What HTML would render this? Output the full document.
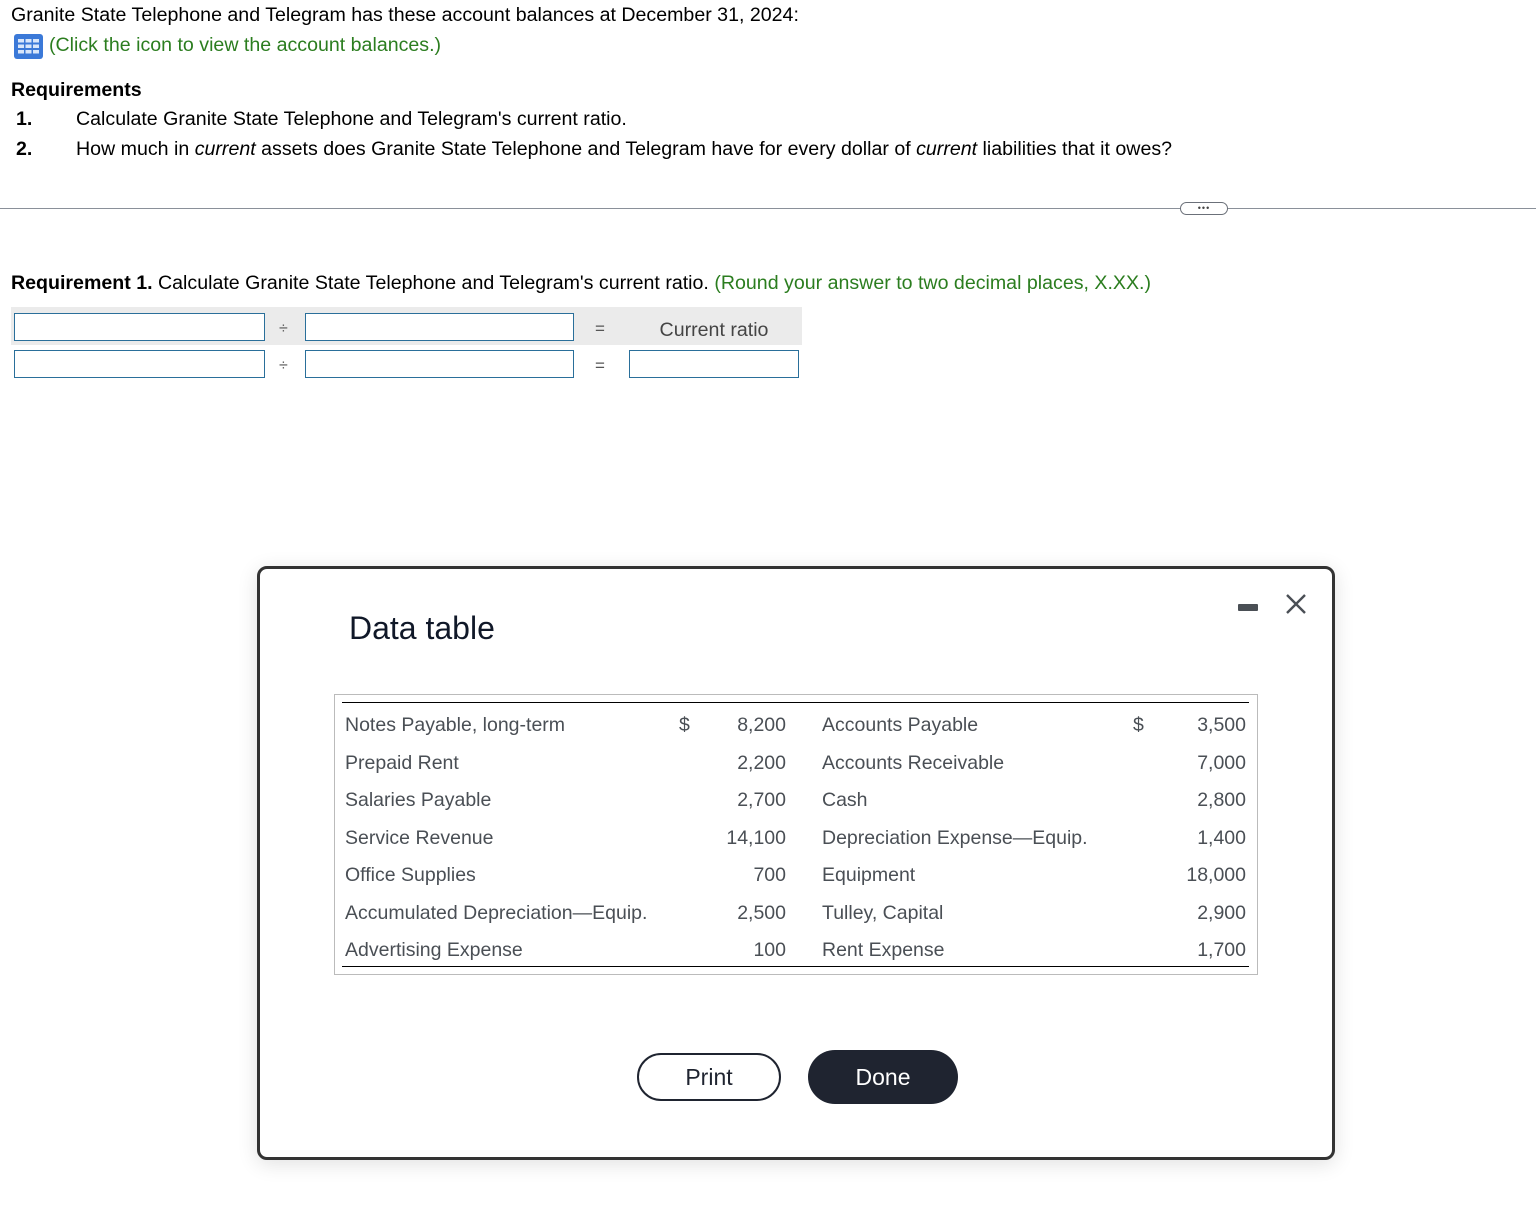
<!DOCTYPE html>
<html><head><meta charset="utf-8"><style>
*{margin:0;padding:0;box-sizing:border-box}
body{width:1536px;height:1206px;background:#fff;font-family:"Liberation Sans",Arial,sans-serif;color:#000;position:relative;overflow:hidden}
.a{position:absolute;white-space:nowrap}
.t18{font-size:19.6px;line-height:20px}
.g{color:#2b7d1f}
.inp{position:absolute;border:1px solid #2a6f9a;background:#fff;height:28px}
.dt{font-size:19.5px;line-height:22px;color:#4a4f55}
.r{text-align:right}
</style></head><body>
<div class="a t18" style="left:11px;top:5px">Granite State Telephone and Telegram has these account balances at December 31, 2024:</div>
<svg class="a" style="left:14px;top:34px" width="29" height="25" viewBox="0 0 29 25"><rect x="0" y="0" width="29" height="25" rx="3" fill="#3b79d8"/><g fill="#d8e6fa"><rect x="4" y="5" width="6" height="3.5"/><rect x="11.5" y="5" width="6" height="3.5"/><rect x="19" y="5" width="6" height="3.5"/><rect x="4" y="10.5" width="6" height="3.5"/><rect x="11.5" y="10.5" width="6" height="3.5"/><rect x="19" y="10.5" width="6" height="3.5"/><rect x="4" y="16" width="6" height="3.5"/><rect x="11.5" y="16" width="6" height="3.5"/><rect x="19" y="16" width="6" height="3.5"/></g></svg>
<div class="a t18 g" style="left:49px;top:35px">(Click the icon to view the account balances.)</div>
<div class="a t18" style="left:11px;top:80px;font-weight:bold">Requirements</div>
<div class="a t18" style="left:16px;top:109px;font-weight:bold">1.</div>
<div class="a t18" style="left:76px;top:109px">Calculate Granite State Telephone and Telegram's current ratio.</div>
<div class="a t18" style="left:16px;top:139px;font-weight:bold">2.</div>
<div class="a t18" style="left:76px;top:139px">How much in <i>current</i> assets does Granite State Telephone and Telegram have for every dollar of <i>current</i> liabilities that it owes?</div>
<div class="a" style="left:0;top:208px;width:1536px;height:1px;background:#8a9099"></div>
<div class="a" style="left:1180px;top:202px;width:48px;height:13px;border:1px solid #6b7079;border-radius:7px;background:#fff;font-size:9px;line-height:10px;text-align:center;color:#444;letter-spacing:1px">&bull;&bull;&bull;</div>
<div class="a t18" style="left:11px;top:273px"><b>Requirement 1.</b> Calculate Granite State Telephone and Telegram's current ratio. <span class="g">(Round your answer to two decimal places, X.XX.)</span></div>
<div class="a" style="left:11px;top:307px;width:791px;height:38px;background:#ebebeb"></div>
<div class="inp" style="left:14px;top:313px;width:251px"></div>
<div class="inp" style="left:305px;top:313px;width:269px"></div>
<div class="inp" style="left:14px;top:350px;width:251px"></div>
<div class="inp" style="left:305px;top:350px;width:269px"></div>
<div class="inp" style="left:629px;top:350px;width:170px"></div>
<div class="a" style="left:279px;top:320px;font-size:16px;color:#555">÷</div>
<div class="a" style="left:279px;top:357px;font-size:16px;color:#555">÷</div>
<div class="a" style="left:595px;top:319px;font-size:17px;color:#555">=</div>
<div class="a" style="left:595px;top:356px;font-size:17px;color:#555">=</div>
<div class="a" style="left:629px;top:320px;width:170px;text-align:center;color:#444;font-size:19.6px;line-height:20px">Current ratio</div>

<div class="a" style="left:257px;top:566px;width:1078px;height:594px;border:3px solid #333;border-radius:10px;background:#fff;box-shadow:0 4px 20px rgba(0,0,0,0.12)"></div>
<div class="a" style="left:349px;top:611px;font-size:32px;line-height:34px;color:#101828">Data table</div>
<div class="a" style="left:1238px;top:604px;width:20px;height:7px;background:#4a4f55;border-radius:1px"></div>
<svg class="a" style="left:1285px;top:593px" width="22" height="22" viewBox="0 0 22 22"><path d="M2 2L20 20M20 2L2 20" stroke="#4a4f55" stroke-width="2.4" fill="none"/></svg>
<div class="a" style="left:334px;top:694px;width:924px;height:281px;border:1px solid #bbb"></div>
<div class="a" style="left:342px;top:702px;width:907px;height:1px;background:#000"></div>
<div class="a" style="left:342px;top:966px;width:907px;height:1px;background:#000"></div>
<div class="a dt" style="left:345px;top:707px;line-height:37.5px">Notes Payable, long-term<br>Prepaid Rent<br>Salaries Payable<br>Service Revenue<br>Office Supplies<br>Accumulated Depreciation—Equip.<br>Advertising Expense</div>
<div class="a dt" style="left:679px;top:707px;line-height:37.5px">$</div>
<div class="a dt r" style="left:686px;width:100px;top:707px;line-height:37.5px">8,200<br>2,200<br>2,700<br>14,100<br>700<br>2,500<br>100</div>
<div class="a dt" style="left:822px;top:707px;line-height:37.5px">Accounts Payable<br>Accounts Receivable<br>Cash<br>Depreciation Expense—Equip.<br>Equipment<br>Tulley, Capital<br>Rent Expense</div>
<div class="a dt" style="left:1133px;top:707px;line-height:37.5px">$</div>
<div class="a dt r" style="left:1146px;width:100px;top:707px;line-height:37.5px">3,500<br>7,000<br>2,800<br>1,400<br>18,000<br>2,900<br>1,700</div>

<div class="a" style="left:637px;top:1053px;width:144px;height:48px;border:2px solid #1f2430;border-radius:24px;font-size:23px;line-height:44px;text-align:center;color:#1f2430">Print</div>
<div class="a" style="left:808px;top:1050px;width:150px;height:54px;background:#1f2430;border-radius:27px;font-size:23px;line-height:54px;text-align:center;color:#fff">Done</div>
</body></html>
